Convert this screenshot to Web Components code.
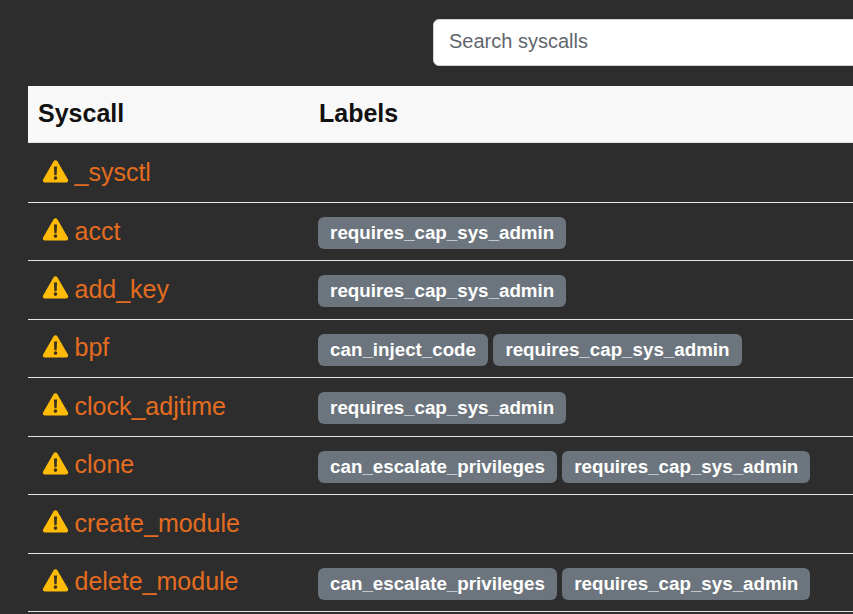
<!DOCTYPE html>
<html><head><meta charset="utf-8"><title>Syscalls</title>
<style>
html,body{margin:0;padding:0;background:#2d2d2d;overflow:hidden;height:100%}
body{font-family:"Liberation Sans",Arial,sans-serif;}
main{display:block;width:853px;height:614px;overflow:hidden;padding-left:28px;box-sizing:border-box}
</style></head><body>
<template id="t-search"><style>
:host{display:flex;height:86px;box-sizing:border-box;padding:19px 0 0 405px}
input{display:block;width:600px;height:47px;box-sizing:border-box;border:1px solid #ced4da;border-radius:6px;background:#fff;padding:0 15px 2px;font:20px "Liberation Sans",Arial,sans-serif;color:#495057;outline:none;flex:none}
input::placeholder{color:#5f666d;opacity:1}
</style><input type="text" placeholder="Search syscalls"></template>

<template id="t-head"><style>
:host{display:grid;grid-template-columns:281px 1fr;width:900px;height:57.4px;margin-bottom:1.15px;box-sizing:border-box;background:#f8f8f8;border-bottom:1px solid #e4e4e4;align-items:center;padding:0 0 1px 10px;font-weight:700;font-size:25px;color:#111}
</style><slot></slot></template>

<template id="t-row"><style>
:host{display:grid;grid-template-columns:276px 1fr;width:900px;height:58.45px;box-sizing:border-box;border-bottom:1px solid #e8e8e8;align-items:center;padding-left:14px}
.name{display:flex;align-items:center;gap:5.5px;font-size:25px;color:#e46c20;position:relative;top:-.7px}
svg{width:27px;height:24px;flex:none;position:relative;top:-2px;left:-.4px}
.labels{display:flex;gap:5.2px;position:relative;top:1.3px}
</style><div class="name"><svg viewBox="0 0 27 24"><path d="M13.5 1.2c-.8 0-1.5.4-1.9 1.1L1.1 20.4c-.8 1.4.2 3 1.8 3h21.2c1.6 0 2.6-1.6 1.8-3L15.4 2.3c-.4-.7-1.1-1.1-1.9-1.1z" fill="#ffbb05"/><path d="M11.9 7.6h3.2l-.5 8.6h-2.2z" fill="#3a3320"/><circle cx="13.5" cy="19.1" r="1.8" fill="#3a3320"/></svg><slot></slot></div><div class="labels"><slot name="labels"></slot></div></template>

<template id="t-badge"><style>
:host{display:inline-flex;align-items:center;height:32px;box-sizing:border-box;padding:0 12.1px;border-radius:6px;background:#6c757d;color:#fff;font-weight:700;font-size:18.75px;white-space:nowrap}
</style><slot></slot></template>

<template id="t-table"><style>:host{display:block}</style><slot></slot></template>

<main>
<sys-search></sys-search>
<sys-table>
<sys-head><span>Syscall</span><span>Labels</span></sys-head>
<sys-row>_sysctl</sys-row>
<sys-row>acct<sys-badge slot="labels">requires_cap_sys_admin</sys-badge></sys-row>
<sys-row>add_key<sys-badge slot="labels">requires_cap_sys_admin</sys-badge></sys-row>
<sys-row>bpf<sys-badge slot="labels">can_inject_code</sys-badge><sys-badge slot="labels">requires_cap_sys_admin</sys-badge></sys-row>
<sys-row>clock_adjtime<sys-badge slot="labels">requires_cap_sys_admin</sys-badge></sys-row>
<sys-row>clone<sys-badge slot="labels">can_escalate_privileges</sys-badge><sys-badge slot="labels">requires_cap_sys_admin</sys-badge></sys-row>
<sys-row>create_module</sys-row>
<sys-row>delete_module<sys-badge slot="labels">can_escalate_privileges</sys-badge><sys-badge slot="labels">requires_cap_sys_admin</sys-badge></sys-row>
</sys-table>
</main>
<script>
for (const [tag,id] of [['sys-search','t-search'],['sys-head','t-head'],['sys-row','t-row'],['sys-badge','t-badge'],['sys-table','t-table']]) {
  customElements.define(tag, class extends HTMLElement {
    constructor(){super();this.attachShadow({mode:'open'}).appendChild(document.getElementById(id).content.cloneNode(true));}
  });
}
</script>
</body></html>
